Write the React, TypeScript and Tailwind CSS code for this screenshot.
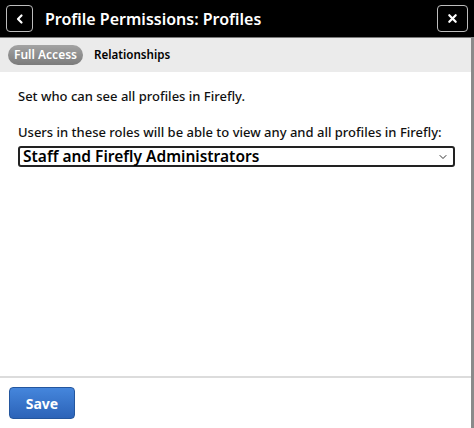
import { ChevronDown } from 'lucide-react';

const font = { fontFamily: '"Noto Sans", "Open Sans", sans-serif' };

export default function App() {
  return (
    <div className="flex h-[428px] w-[474px] flex-col bg-white" style={font}>
      {/* header */}
      <div className="flex h-[37px] shrink-0 items-center bg-black pl-[6px] pr-[6px]">
        <button className="flex h-[27px] w-[27px] items-center justify-center rounded-[4px] border border-[#bdbdbd] text-white">
          <svg viewBox="0 0 12 12" className="h-[12px] w-[12px]">
            <path d="M7.5 2.5 4 6l3.5 3.5" fill="none" stroke="currentColor" strokeWidth="2.2" strokeLinecap="round" strokeLinejoin="round" />
          </svg>
        </button>
        <h1 className="ml-[12px] flex-1 text-[16px] font-semibold text-white">Profile Permissions: Profiles</h1>
        <button className="flex h-[27px] w-[31px] items-center justify-center rounded-[4px] border border-[#bdbdbd] text-white">
          <svg viewBox="0 0 12 12" className="h-[11px] w-[11px]">
            <path d="M2.5 2.5l7 7M9.5 2.5l-7 7" fill="none" stroke="currentColor" strokeWidth="2.4" strokeLinecap="round" />
          </svg>
        </button>
      </div>

      <div className="flex flex-1 flex-col border-r-[3px] border-[#8a8a8a]">
        {/* tabs */}
        <div className="flex h-[35px] shrink-0 items-center gap-[11px] border-t border-[#7a7a7a] bg-[#ebebeb] pl-[8px]">
          <span className="rounded-full bg-gradient-to-b from-[#a3a3a3] to-[#7b7b7b] px-[6px] py-[1px] text-[12px] font-semibold text-white">Full Access</span>
          <span className="text-[11.6px] font-semibold text-black">Relationships</span>
        </div>

        {/* body */}
        <div className="flex-1 px-[18px] pt-[15px]">
          <p className="text-[13px] font-medium leading-[18px] text-[#111]">Set who can see all profiles in Firefly.</p>
          <p className="mt-[18px] text-[13px] font-medium leading-[18px] text-[#111]">Users in these roles will be able to view any and all profiles in Firefly:</p>
          <div className="mt-[5px] flex h-[21px] w-[437px] items-center justify-between rounded-[3px] border-2 border-[#222] pl-[3px] pr-[4px]">
            <span className="text-[15.5px] font-semibold leading-none text-black">Staff and Firefly Administrators</span>
            <ChevronDown className="h-[12px] w-[12px] text-[#333]" strokeWidth={2} />
          </div>
        </div>

        {/* footer */}
        <div className="flex h-[52px] shrink-0 items-start border-t-2 border-[#dcdcdc] pl-[9px] pt-[9px]">
          <button className="h-[32px] w-[66px] rounded-[4px] border border-[#24569e] bg-gradient-to-b from-[#4586dc] to-[#2c63b8] text-[14px] font-bold text-white">Save</button>
        </div>
      </div>
    </div>
  );
}
